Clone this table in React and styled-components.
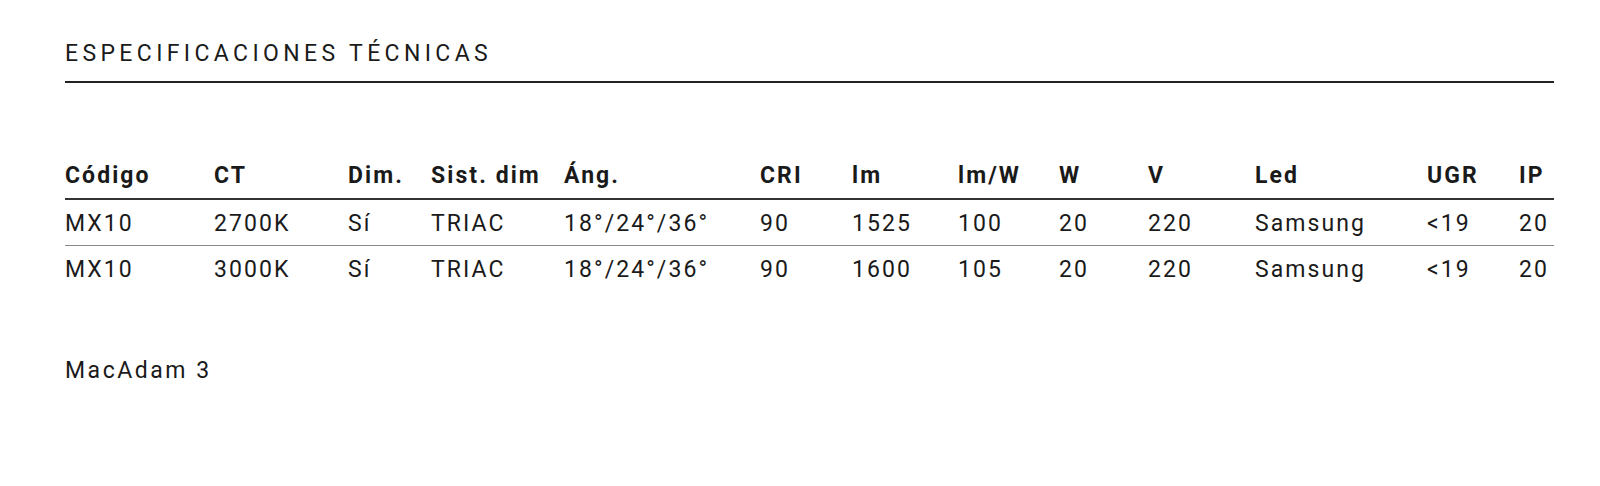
import React from "react";
import styled, { createGlobalStyle } from "styled-components";

const Global = createGlobalStyle`
  html, body { margin: 0; padding: 0; background: #fff; }
  body { font-family: Roboto, "Liberation Sans", sans-serif; color: #1a1a1a; }
`;

const Page = styled.div`
  padding: 40px 46px 0 65px;
`;

const Header = styled.div`
  padding-bottom: 13px;
  border-bottom: 2px solid #222;
`;

const Title = styled.h2`
  margin: 0;
  font-size: 23px;
  line-height: 28px;
  font-weight: 400;
  letter-spacing: 0.19em;
  text-transform: uppercase;
`;

const Table = styled.table`
  width: 100%;
  margin-top: 79px;
  border-collapse: collapse;
  table-layout: fixed;
`;

const Col = styled.col`
  width: ${(p) => p.$w}px;
`;

const Th = styled.th`
  text-align: left;
  font-weight: 700;
  font-size: 23px;
  line-height: 28px;
  letter-spacing: 0.09em;
  padding: 0 0 8px;
  white-space: nowrap;
  border-bottom: 2px solid #333;
`;

const Td = styled.td`
  text-align: left;
  font-weight: 400;
  font-size: 23px;
  line-height: 28px;
  letter-spacing: 0.09em;
  padding: 10px 0 7px;
  white-space: nowrap;
  border-bottom: ${(p) => (p.$last ? "none" : "1px solid #8a8a8a")};
`;

const Note = styled.p`
  margin: 66px 0 0;
  font-size: 23px;
  line-height: 28px;
  letter-spacing: 0.11em;
`;

const widths = [149, 134, 83, 133, 196, 92, 106, 101, 89, 107, 172, 92, 35];
const heads = ["Código", "CT", "Dim.", "Sist. dim", "Áng.", "CRI", "lm", "lm/W", "W", "V", "Led", "UGR", "IP"];
const rows = [
  ["MX10", "2700K", "Sí", "TRIAC", "18°/24°/36°", "90", "1525", "100", "20", "220", "Samsung", "<19", "20"],
  ["MX10", "3000K", "Sí", "TRIAC", "18°/24°/36°", "90", "1600", "105", "20", "220", "Samsung", "<19", "20"],
];

export default function App() {
  return (
    <Page>
      <Global />
      <Header>
        <Title>Especificaciones técnicas</Title>
      </Header>
      <Table>
        <colgroup>
          {widths.map((w, i) => (
            <Col key={i} $w={w} />
          ))}
        </colgroup>
        <thead>
          <tr>
            {heads.map((h) => (
              <Th key={h}>{h}</Th>
            ))}
          </tr>
        </thead>
        <tbody>
          {rows.map((r, ri) => (
            <tr key={ri}>
              {r.map((c, ci) => (
                <Td key={ci} $last={ri === rows.length - 1}>
                  {c}
                </Td>
              ))}
            </tr>
          ))}
        </tbody>
      </Table>
      <Note>MacAdam 3</Note>
    </Page>
  );
}
